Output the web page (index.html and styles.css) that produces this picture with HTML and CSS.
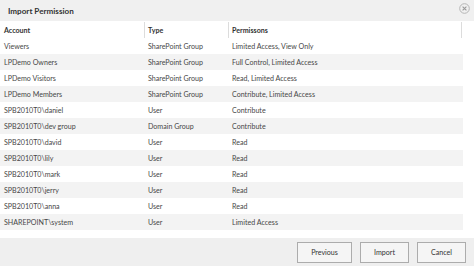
FILE: index.html
```html
<!DOCTYPE html>
<html>
<head>
<meta charset="utf-8">
<link rel="stylesheet" href="styles.css">
</head>
<body>
<div class="dialog">
  <div class="titlebar">
    <span class="title">Import Permission</span>
    <svg class="close" width="11" height="11" viewBox="0 0 11 11">
      <circle cx="5.5" cy="5.5" r="4.8" fill="none" stroke="#b5b5b5" stroke-width="1"/>
      <path d="M3.6 3.6 L7.4 7.4 M7.4 3.6 L3.6 7.4" stroke="#9a9a9a" stroke-width="1.1"/>
    </svg>
  </div>
  <div class="table">
    <div class="row head">
      <div class="c c1">Account</div><div class="c c2">Type</div><div class="c c3">Permissons</div>
    </div>
    <div class="row"><div class="c c1">Viewers</div><div class="c c2">SharePoint Group</div><div class="c c3">Limited Access, View Only</div></div>
    <div class="row alt"><div class="c c1">LPDemo Owners</div><div class="c c2">SharePoint Group</div><div class="c c3">Full Control, Limited Access</div></div>
    <div class="row"><div class="c c1">LPDemo Visitors</div><div class="c c2">SharePoint Group</div><div class="c c3">Read, Limited Access</div></div>
    <div class="row alt"><div class="c c1">LPDemo Members</div><div class="c c2">SharePoint Group</div><div class="c c3">Contribute, Limited Access</div></div>
    <div class="row"><div class="c c1">SPB2010T0\daniel</div><div class="c c2">User</div><div class="c c3">Contribute</div></div>
    <div class="row alt"><div class="c c1">SPB2010T0\dev group</div><div class="c c2">Domain Group</div><div class="c c3">Contribute</div></div>
    <div class="row"><div class="c c1">SPB2010T0\david</div><div class="c c2">User</div><div class="c c3">Read</div></div>
    <div class="row alt"><div class="c c1">SPB2010T0\lily</div><div class="c c2">User</div><div class="c c3">Read</div></div>
    <div class="row"><div class="c c1">SPB2010T0\mark</div><div class="c c2">User</div><div class="c c3">Read</div></div>
    <div class="row alt"><div class="c c1">SPB2010T0\jerry</div><div class="c c2">User</div><div class="c c3">Read</div></div>
    <div class="row"><div class="c c1">SPB2010T0\anna</div><div class="c c2">User</div><div class="c c3">Read</div></div>
    <div class="row alt"><div class="c c1">SHAREPOINT\system</div><div class="c c2">User</div><div class="c c3">Limited Access</div></div>
  </div>
  <div class="footer">
    <button class="btn wide">Previous</button>
    <button class="btn">Import</button>
    <button class="btn">Cancel</button>
  </div>
</div>
</body>
</html>
```
FILE: styles.css
```css
html, body {
  margin: 0;
  padding: 0;
  background: #ffffff;
}
body {
  font-family: Lato, "Open Sans", sans-serif;
  font-size: 7.1px;
  color: #474747;
}
.dialog {
  width: 474px;
  height: 266px;
  display: flex;
  flex-direction: column;
}
.titlebar {
  height: 21px;
  background: #f0f0f0;
  display: flex;
  align-items: center;
  justify-content: space-between;
  padding: 0 4px 0 8px;
  box-sizing: border-box;
}
.title {
  font-weight: bold;
  font-size: 8.1px;
  color: #333;
}
.close {
  margin-top: -5px;
}
.table {
  width: 463px;
  margin-top: 1px;
}
.row {
  display: flex;
  height: 16px;
  align-items: center;
}
.row.alt {
  background: #f3f3f3;
}
.row.head {
  width: 462px;
  background: #fff;
  font-weight: bold;
  color: #333;
  border-right: 1px solid #dcdcdc;
  box-sizing: border-box;
  height: 16px;
}
.c {
  padding-left: 4px;
  box-sizing: border-box;
  white-space: nowrap;
}
.c1 { width: 144px; }
.c2 { width: 84px; }
.c3 { flex: 1; }
.head .c { height: 100%; display: flex; align-items: center; }
.head .c2, .head .c3 { border-left: 1px solid #dcdcdc; padding-left: 3px; }
.footer {
  margin-top: auto;
  height: 28px;
  background: #efefef;
  display: flex;
  justify-content: flex-end;
  align-items: flex-start;
  gap: 8px;
  padding: 4px 8px 0 0;
  box-sizing: border-box;
}
.btn {
  width: 49px;
  height: 21px;
  font-family: inherit;
  font-size: 7.1px;
  color: #333;
  background: #f5f5f5;
  border: 1px solid #acacac;
  padding: 0;
}
.btn.wide { width: 55px; }
```
